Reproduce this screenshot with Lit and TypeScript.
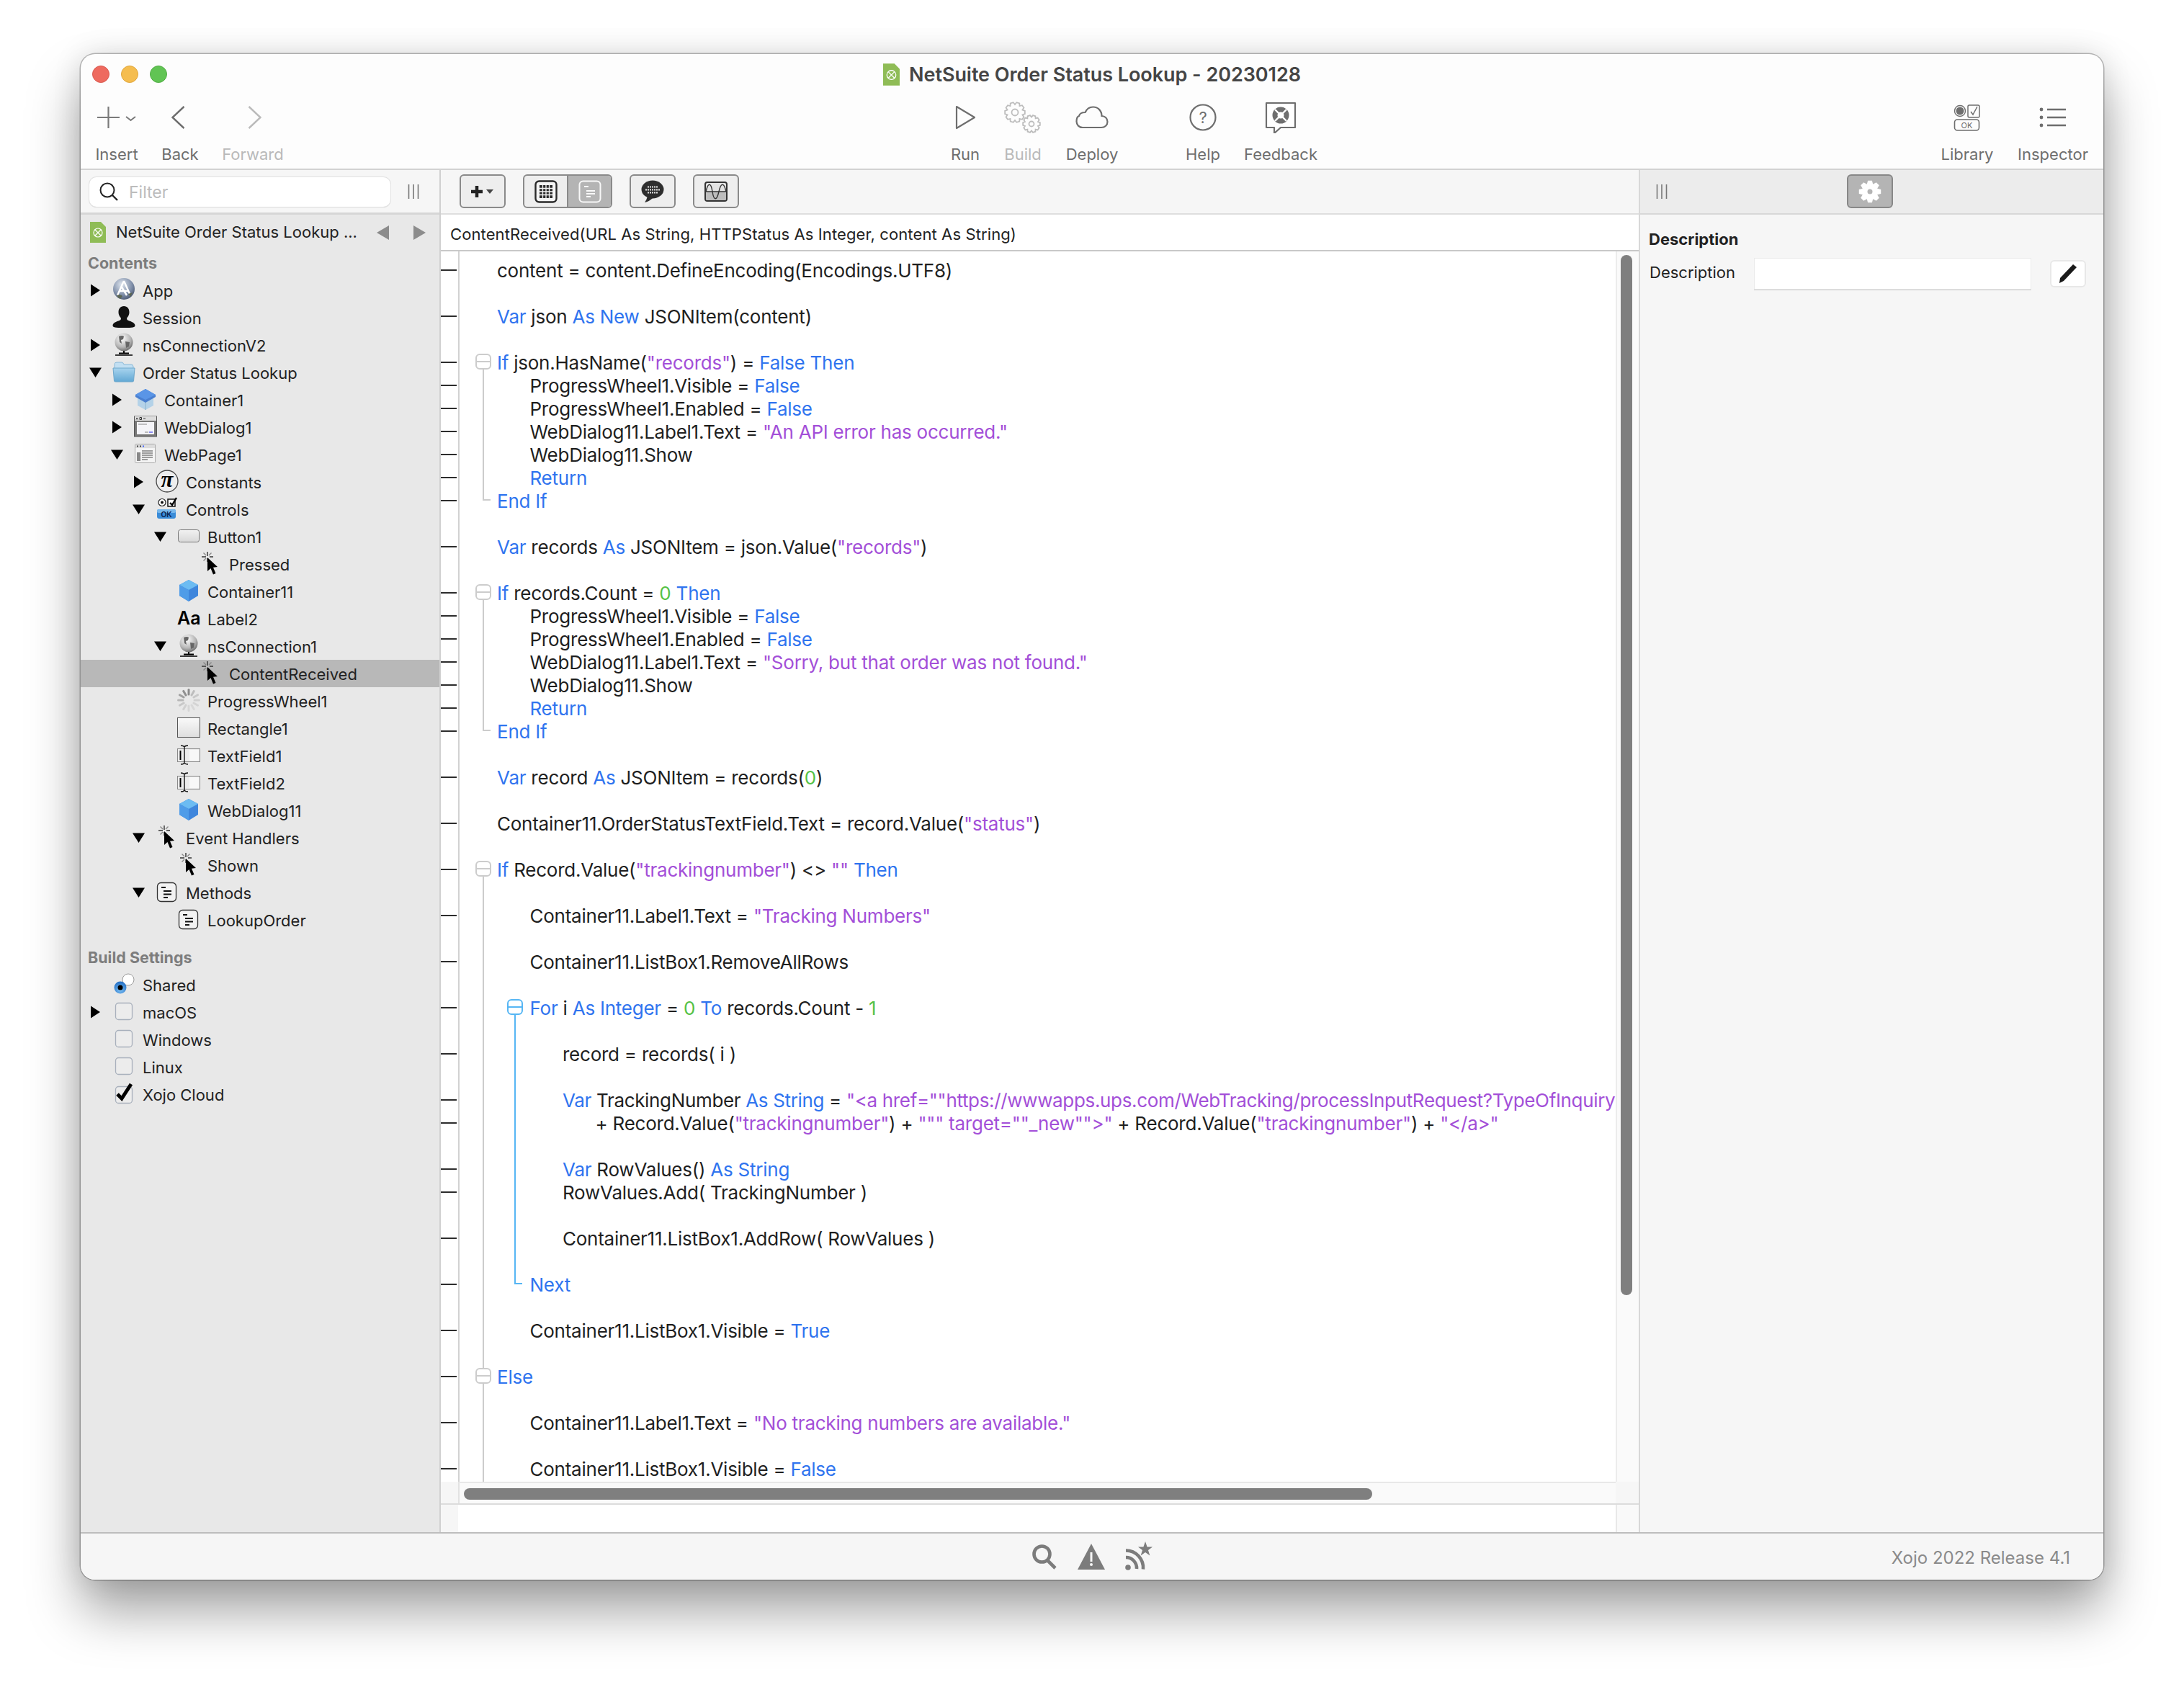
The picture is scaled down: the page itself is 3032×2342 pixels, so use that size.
import { LitElement, html, css } from 'lit';
import { customElement } from 'lit/decorators.js';
import { unsafeSVG } from 'lit/directives/unsafe-svg.js';

// gear outline, used by the Build icon and the inspector tab
const gearPath = (cx: number, cy: number, ro: number, ri: number, n: number) => {
  let d = '';
  const step = (Math.PI * 2) / n;
  for (let i = 0; i < n; i++) {
    const a = i * step;
    const pts: [number, number][] = [
      [ri, a - step * 0.5],
      [ro, a - step * 0.24],
      [ro, a + step * 0.24],
      [ri, a + step * 0.5],
    ];
    for (const [r, t] of pts) {
      d += `${i === 0 && t === a - step * 0.5 ? 'M' : 'L'}${(cx + r * Math.cos(t)).toFixed(2)} ${(cy + r * Math.sin(t)).toFixed(2)} `;
    }
  }
  return d + 'Z';
};

const SPARK = `<g stroke-width="1.4"><path d="M12 0v6M12 9v5M4 7h6M15 7h5" stroke="#333"/><path d="M6.5 1.5l3.5 3.5M17.500 1.500l-3.500 3.500M6.500 12.500l3.500-3.500" stroke="#888"/></g>`;
const CURSOR = `<path d="M12 8v19l4.500-4 3.500 8.500 3.500-1.600-3.500-8.200 6-.700z" fill="#000"/>`;

const ICONS: Record<string, string> = {
  app: `<defs><radialGradient id="g1" cx=".4" cy=".3" r=".8"><stop offset="0" stop-color="#dfe6ef"/><stop offset=".6" stop-color="#7f8ea8"/><stop offset="1" stop-color="#3f4c66"/></radialGradient></defs><circle cx="16" cy="15" r="15" fill="url(#g1)"/><path d="M16 4L7 24M16 4l9 20M9 18h14M12 11l8 13" stroke="#fff" stroke-width="2.400" fill="none"/><path d="M6 24q6-2 8 1l-3 4q-4-2-5-5zM22 22l6-2-3 6z" fill="#5b6552"/>`,
  person: `<path d="M16 1c5 0 7.500 3.600 7.500 8.500 0 3.500-1.500 6-3.500 8l.5 2.500c3 2 11 3 11 8 0 2.500-3 3-15.500 3S.500 30.500.500 28c0-5 8-6 11-8l.5-2.500c-2-2-3.500-4.500-3.500-8C8.500 4.600 11 1 16 1z" fill="#111"/>`,
  globe: `<defs><radialGradient id="g2" cx=".4" cy=".3" r=".8"><stop offset="0" stop-color="#fff"/><stop offset=".6" stop-color="#b5b5b5"/><stop offset="1" stop-color="#555"/></radialGradient></defs><circle cx="16" cy="13" r="12.500" fill="url(#g2)"/><path d="M9 5q5-2 7 0l-1 4-3 1 1 5-3-2zM18 12l6 1-1 6-4 2z" fill="#666"/><path d="M16 25v3M9 28.500h14" stroke="#000" stroke-width="2"/><path d="M4 31h24" stroke="#000" stroke-width="1.500"/>`,
  folder: `<defs><linearGradient id="g3" x1="0" y1="0" x2="0" y2="1"><stop offset="0" stop-color="#a8d4ee"/><stop offset="1" stop-color="#62a8d4"/></linearGradient></defs><path d="M3 6q0-3 3-3h7q2 0 3 3h10q3 0 3 3v3H3z" fill="#c2dff2" stroke="#88b8d8"/><path d="M1 11h30l-1.500 18q0 1-2 1h-23q-2 0-2-1z" fill="url(#g3)" stroke="#6fa8cc"/>`,
  lidbox: `<path d="M5 12v13l11 6 11-6V12z" fill="#b4d2e8"/><path d="M16 18v13" stroke="#98bcd6" stroke-width="1.500"/><path d="M2 10L16 2l14 8v3L16 21 2 13z" fill="#4a7fd0"/><path d="M2 10L16 2l14 8-14 7z" fill="#5a95e6"/>`,
  dialog: `<rect x="0.500" y="2" width="31" height="28" fill="#777" stroke="#555"/><rect x="1" y="2" width="30" height="6" fill="#ddd"/><path d="M3 4l2.500 2.500M5.500 4L3 6.500M8 3.500h2.500V6.500H8zM13 5h3" stroke="#333" fill="none"/><rect x="4" y="10" width="24" height="17" fill="#f4f4f8"/><path d="M6 13h12" stroke="#888"/><rect x="15" y="23" width="5" height="2" fill="#bbb"/><rect x="21" y="23" width="5" height="2" fill="#8a8af0"/>`,
  page: `<rect x="1.500" y="2.500" width="28" height="26" fill="#f4f4f4" stroke="#aaa" rx="1"/><rect x="2" y="3" width="27" height="5" fill="#ddd"/><path d="M4 4.500h2v2H4zM8 4.500h2v2H8z" fill="#444"/><rect x="12" y="4.500" width="2" height="2" fill="#46f"/><rect x="4" y="14" width="5" height="12" fill="#888"/><path d="M11 12h15M11 15h15M11 18h15M11 21h15M11 24h8" stroke="#444"/>`,
  pi: `<circle cx="16" cy="16" r="15" fill="#eee" stroke="#444" stroke-width="1.300"/><text x="16" y="24" text-anchor="middle" font-family="Liberation Serif" font-style="italic" font-weight="700" font-size="31" fill="#000">π</text>`,
  controls: `<circle cx="9" cy="7.500" r="5" fill="#fff" stroke="#222" stroke-width="1.200"/><circle cx="9" cy="7.500" r="2" fill="#111"/><rect x="17" y="3" width="10" height="10" fill="#fff" stroke="#111" stroke-width="1.500"/><path d="M20 8l3 3 6-10" stroke="#000" stroke-width="2.400" fill="none"/><rect x="2" y="17" width="26" height="13" rx="3" fill="#3a8cd8"/><rect x="2" y="17" width="26" height="5" rx="2" fill="#78b8ec"/><text x="15" y="28" text-anchor="middle" font-family="Liberation Sans" font-weight="700" font-size="10" fill="#0b2550">OK</text>`,
  button: `<defs><linearGradient id="g4" x1="0" y1="0" x2="0" y2="1"><stop offset="0" stop-color="#f2f2f2"/><stop offset="1" stop-color="#d8d8d8"/></linearGradient></defs><rect x="1.500" y="7.500" width="29" height="17" rx="3" fill="url(#g4)" stroke="#777"/>`,
  event: SPARK + CURSOR,
  cube: `<path d="M16 1l13 7v15l-13 8-13-8V8z" fill="#3f86dc"/><path d="M16 1l13 7-13 7L3 8z" fill="#6cbcf2"/><path d="M16 15v16L3 23V8z" fill="#4f9ce8"/>`,
  wheel: Array.from({ length: 12 }, (_, i) => {
    const a = (i * 30 * Math.PI) / 180;
    const shade = ['#8a8a8a', '#bdbdbd', '#c8c8c8', '#d0d0d0', '#d4d4d4', '#d8d8d8', '#d6d6d6', '#d0d0d0', '#c8c8c8', '#b8b8b8', '#a0a0a0', '#909090'][i];
    return `<path d="M${16 + 8 * Math.sin(a)} ${16 - 8 * Math.cos(a)}L${16 + 14.5 * Math.sin(a)} ${16 - 14.5 * Math.cos(a)}" stroke="${shade}" stroke-width="3" stroke-linecap="round"/>`;
  }).join(''),
  rect: `<defs><linearGradient id="g5" x1="0" y1="0" x2="0" y2="1"><stop offset="0" stop-color="#fafafa"/><stop offset="1" stop-color="#dedede"/></linearGradient></defs><rect x="0.500" y="2.500" width="31" height="27" fill="url(#g5)" stroke="#555"/>`,
  field: `<rect x="0.500" y="7.500" width="31" height="18" fill="#ececec" stroke="#888"/><rect x="17" y="9" width="13" height="15" fill="#f8f8f8"/><path d="M4.500 10v13" stroke="#000" stroke-width="2"/><path d="M5 3q4 0 5 2 1-2 5-2M10 5v22M5 29q4 0 5-2 1 2 5 2" stroke="#111" stroke-width="1.400" fill="none"/>`,
  method: `<rect x="2.500" y="3.500" width="26" height="26" rx="5" fill="#f2f2f2" stroke="#333" stroke-width="1.300"/><path d="M8 10h6M11 15h11M11 19.500h11M11 24h6" stroke="#111" stroke-width="2"/>`,
  radios: `<defs><radialGradient id="g6" cx=".5" cy=".7" r=".7"><stop offset="0" stop-color="#7cc0f4"/><stop offset="1" stop-color="#1f6cc4"/></radialGradient></defs><circle cx="22" cy="10" r="8" fill="#fff" stroke="#999"/><circle cx="11" cy="21" r="8.500" fill="url(#g6)"/><circle cx="11" cy="21" r="3.500" fill="#000"/>`,
  box: `<rect x="4.500" y="4.500" width="23" height="23" rx="4" fill="#ececec" stroke="#a8b0bc" stroke-width="1.300"/>`,
  checked: `<rect x="4.500" y="6.500" width="23" height="23" rx="4" fill="#ececec" stroke="#a8b0bc" stroke-width="1.300"/><path d="M7 17l6 6L26 3" stroke="#000" stroke-width="5" fill="none"/>`,
};

type TreeRow = { t: string; l: number; i?: string; a?: 'r' | 'd'; sel?: boolean };

const TREE: TreeRow[] = [
  { t: 'App', l: 0, i: 'app', a: 'r' },
  { t: 'Session', l: 0, i: 'person' },
  { t: 'nsConnectionV2', l: 0, i: 'globe', a: 'r' },
  { t: 'Order Status Lookup', l: 0, i: 'folder', a: 'd' },
  { t: 'Container1', l: 1, i: 'lidbox', a: 'r' },
  { t: 'WebDialog1', l: 1, i: 'dialog', a: 'r' },
  { t: 'WebPage1', l: 1, i: 'page', a: 'd' },
  { t: 'Constants', l: 2, i: 'pi', a: 'r' },
  { t: 'Controls', l: 2, i: 'controls', a: 'd' },
  { t: 'Button1', l: 3, i: 'button', a: 'd' },
  { t: 'Pressed', l: 4, i: 'event' },
  { t: 'Container11', l: 3, i: 'cube' },
  { t: 'Label2', l: 3, i: 'aa' },
  { t: 'nsConnection1', l: 3, i: 'globe', a: 'd' },
  { t: 'ContentReceived', l: 4, i: 'event', sel: true },
  { t: 'ProgressWheel1', l: 3, i: 'wheel' },
  { t: 'Rectangle1', l: 3, i: 'rect' },
  { t: 'TextField1', l: 3, i: 'field' },
  { t: 'TextField2', l: 3, i: 'field' },
  { t: 'WebDialog11', l: 3, i: 'cube' },
  { t: 'Event Handlers', l: 2, i: 'event', a: 'd' },
  { t: 'Shown', l: 3, i: 'event' },
  { t: 'Methods', l: 2, i: 'method', a: 'd' },
  { t: 'LookupOrder', l: 3, i: 'method' },
];

const BUILD: TreeRow[] = [
  { t: 'Shared', l: 0, i: 'radios' },
  { t: 'macOS', l: 0, i: 'box', a: 'r' },
  { t: 'Windows', l: 0, i: 'box' },
  { t: 'Linux', l: 0, i: 'box' },
  { t: 'Xojo Cloud', l: 0, i: 'checked' },
];

// [indent, source]; empty string is a blank line
const CODE: [number, string][] = [
  [0, 'content = content.DefineEncoding(Encodings.UTF8)'],
  [0, ''],
  [0, 'Var json As New JSONItem(content)'],
  [0, ''],
  [0, 'If json.HasName("records") = False Then'],
  [1, 'ProgressWheel1.Visible = False'],
  [1, 'ProgressWheel1.Enabled = False'],
  [1, 'WebDialog11.Label1.Text = "An API error has occurred."'],
  [1, 'WebDialog11.Show'],
  [1, 'Return'],
  [0, 'End If'],
  [0, ''],
  [0, 'Var records As JSONItem = json.Value("records")'],
  [0, ''],
  [0, 'If records.Count = 0 Then'],
  [1, 'ProgressWheel1.Visible = False'],
  [1, 'ProgressWheel1.Enabled = False'],
  [1, 'WebDialog11.Label1.Text = "Sorry, but that order was not found."'],
  [1, 'WebDialog11.Show'],
  [1, 'Return'],
  [0, 'End If'],
  [0, ''],
  [0, 'Var record As JSONItem = records(0)'],
  [0, ''],
  [0, 'Container11.OrderStatusTextField.Text = record.Value("status")'],
  [0, ''],
  [0, 'If Record.Value("trackingnumber") <> "" Then'],
  [0, ''],
  [1, 'Container11.Label1.Text = "Tracking Numbers"'],
  [0, ''],
  [1, 'Container11.ListBox1.RemoveAllRows'],
  [0, ''],
  [1, 'For i As Integer = 0 To records.Count - 1'],
  [0, ''],
  [2, 'record = records( i )'],
  [0, ''],
  [2, 'Var TrackingNumber As String = "<a href=""https://wwwapps.ups.com/WebTracking/processInputRequest?TypeOfInquiry'],
  [3, '+ Record.Value("trackingnumber") + """ target=""_new"">" + Record.Value("trackingnumber") + "</a>"'],
  [0, ''],
  [2, 'Var RowValues() As String'],
  [2, 'RowValues.Add( TrackingNumber )'],
  [0, ''],
  [2, 'Container11.ListBox1.AddRow( RowValues )'],
  [0, ''],
  [1, 'Next'],
  [0, ''],
  [1, 'Container11.ListBox1.Visible = True'],
  [0, ''],
  [0, 'Else'],
  [0, ''],
  [1, 'Container11.Label1.Text = "No tracking numbers are available."'],
  [0, ''],
  [1, 'Container11.ListBox1.Visible = False'],
];

// fold markers: first line, last line, x inside the code body
const FOLDS = [
  { from: 4, to: 10, x: 48, blue: false },
  { from: 14, to: 20, x: 48, blue: false },
  { from: 26, to: 48, x: 48, blue: false },
  { from: 48, to: 54, x: 48, blue: false, open: true },
  { from: 32, to: 44, x: 92, blue: true },
];

const TOKEN = /"(?:[^"]|"")*"?|\b(?:Var|As|New|If|Then|False|True|Return|End|For|To|Integer|String|Next|Else)\b|\b\d+\b/g;

function highlight(src: string) {
  const out: unknown[] = [];
  let last = 0;
  for (const m of src.matchAll(TOKEN)) {
    const i = m.index ?? 0;
    if (i > last) out.push(src.slice(last, i));
    const tok = m[0];
    const cls = tok[0] === '"' ? 's' : /\d/.test(tok[0]) ? 'n' : 'k';
    out.push(html`<span class=${cls}>${tok}</span>`);
    last = i + tok.length;
  }
  if (last < src.length) out.push(src.slice(last));
  return out;
}

const xojoDoc = (w: number, h: number) => html`<svg width=${w} height=${h} viewBox="0 0 22 29">
  <path d="M0 0h15l7 7v22H0z" fill="#8fbc56" />
  <circle cx="11" cy="15" r="6" fill="none" stroke="#fff" stroke-width="1.200" />
  <path d="M7 11l8 8M15 11l-8 8" stroke="#fff" stroke-width="1.200" />
</svg>`;

const TOOL_ICONS: Record<string, unknown> = {
  insert: html`<svg width="58" height="50" viewBox="0 0 58 50">
    <path d="M2 25h31M17.500 10v30" stroke="#7a7a7a" stroke-width="2.200" fill="none" />
    <path d="M42 24l6.500 5 6.500-5" stroke="#7a7a7a" stroke-width="2" fill="none" />
  </svg>`,
  back: html`<svg width="24" height="34" viewBox="0 0 24 34"><path d="M17.500 2L1.500 17l16 15" stroke="#6e6e6e" stroke-width="2.400" fill="none" /></svg>`,
  forward: html`<svg width="24" height="34" viewBox="0 0 24 34"><path d="M6.500 2l16 15-16 15" stroke="#bbb" stroke-width="2.400" fill="none" /></svg>`,
  run: html`<svg width="32" height="34" viewBox="0 0 32 34"><path d="M4 2l25 15L4 32z" stroke="#6e6e6e" stroke-width="2.200" fill="none" stroke-linejoin="round" /></svg>`,
  build: html`<svg width="52" height="44" viewBox="0 0 52 44">
    <path d=${gearPath(15, 15, 14, 11, 10)} fill="none" stroke="#bdbdbd" stroke-width="1.800" />
    <circle cx="15" cy="15" r="4.500" fill="none" stroke="#bdbdbd" stroke-width="1.800" />
    <path d=${gearPath(38, 31, 12, 9.5, 10)} fill="none" stroke="#bdbdbd" stroke-width="1.800" />
    <circle cx="38" cy="31" r="3.500" fill="none" stroke="#bdbdbd" stroke-width="1.800" />
  </svg>`,
  deploy: html`<svg width="46" height="32" viewBox="0 0 46 32"><path d="M10 30h26c5 0 8.500-3.500 8.500-8s-3.500-8-8-8c0-7-5-12.500-12-12.500-5.500 0-9 3-11 7.500-6 0-8 3-8.500 5C2 15 1.500 18 1.500 21.500 1.500 26.500 5 30 10 30z" fill="none" stroke="#6e6e6e" stroke-width="2.200" /></svg>`,
  help: html`<svg width="38" height="38" viewBox="0 0 38 38"><circle cx="19" cy="19" r="17.500" fill="none" stroke="#6e6e6e" stroke-width="2.200" /><text x="19" y="27" text-anchor="middle" font-family="Inter" font-size="22" fill="#6e6e6e">?</text></svg>`,
  feedback: html`<svg width="44" height="44" viewBox="0 0 44 44">
    <path d="M2 2h40v34H22l-9 8v-8H2z" fill="#fff" stroke="#6e6e6e" stroke-width="2.200" stroke-linejoin="round" />
    <circle cx="22" cy="19" r="11.500" fill="#6e6e6e" />
    <path d="M14 11l16 16M30 11L14 27" stroke="#fff" stroke-width="2.400" />
    <circle cx="22" cy="19" r="4.500" fill="#fff" />
  </svg>`,
  library: html`<svg width="38" height="38" viewBox="0 0 38 38">
    <circle cx="9" cy="10" r="7.500" fill="#fff" stroke="#6e6e6e" stroke-width="1.400" /><circle cx="9" cy="10" r="5.500" fill="#6e6e6e" />
    <rect x="20" y="2" width="16" height="17" rx="2" fill="none" stroke="#6e6e6e" stroke-width="1.500" /><path d="M24 11l3 4 6-11" stroke="#6e6e6e" stroke-width="1.500" fill="none" />
    <rect x="1.500" y="22" width="34" height="15" rx="4" fill="none" stroke="#6e6e6e" stroke-width="1.600" />
    <text x="18.500" y="34" text-anchor="middle" font-family="Inter" font-size="11" fill="#6e6e6e">OK</text>
  </svg>`,
  inspector: html`<svg width="38" height="28" viewBox="0 0 38 28">
    <circle cx="3" cy="3" r="2.400" fill="#6e6e6e" /><circle cx="3" cy="14" r="2.400" fill="#6e6e6e" /><circle cx="3" cy="25" r="2.400" fill="#6e6e6e" />
    <path d="M11 3h26M11 14h26M11 25h26" stroke="#6e6e6e" stroke-width="2.400" />
  </svg>`,
};

const TOOLS_LEFT = [
  { k: 'insert', label: 'Insert', w: 88 },
  { k: 'back', label: 'Back', w: 88 },
  { k: 'forward', label: 'Forward', w: 114, off: true },
];
const TOOLS_MID = [
  { k: 'run', label: 'Run', w: 80 },
  { k: 'build', label: 'Build', w: 80, off: true },
  { k: 'deploy', label: 'Deploy', w: 112 },
];
const TOOLS_HELP = [
  { k: 'help', label: 'Help', w: 100 },
  { k: 'feedback', label: 'Feedback', w: 116 },
];
const TOOLS_RIGHT = [
  { k: 'library', label: 'Library', w: 120 },
  { k: 'inspector', label: 'Inspector', w: 118 },
];

const columns = (c = '#777') => html`<svg class="cols" width="16" height="20" viewBox="0 0 16 20"><path d="M1.500 0v20M8 0v20M14.500 0v20" stroke=${c} stroke-width="1.600" /></svg>`;

@customElement('app-root')
export class AppRoot extends LitElement {
  static styles = css`
    :host {
      display: block;
      width: 3032px;
      height: 2342px;
      background: #fff;
      font-family: Inter, 'Liberation Sans', sans-serif;
      color: #222;
      overflow: hidden;
    }

    .window {
      box-sizing: border-box;
      width: 2808px;
      height: 2118px;
      margin: 75px 0 0 112px;
      border-radius: 20px;
      overflow: hidden;
      display: flex;
      flex-direction: column;
      background: #fdfdfd;
      box-shadow: 0 0 0 1.5px rgba(0, 0, 0, 0.25), 0 44px 72px rgba(0, 0, 0, 0.36), 0 0 40px rgba(0, 0, 0, 0.12);
    }

    .toolbar {
      box-sizing: border-box;
      height: 161px;
      flex: none;
      border-bottom: 2px solid #d2d2d2;
    }

    .titlebar {
      height: 56px;
      display: grid;
      grid-template-columns: 1fr auto 1fr;
      align-items: center;
    }

    .lights {
      display: flex;
      gap: 16px;
      padding-left: 16px;
    }

    .light {
      width: 24px;
      height: 24px;
      border-radius: 50%;
      box-sizing: border-box;
    }
    .light.red { background: #ee6a5f; border: 1px solid #d85a50; }
    .light.yellow { background: #f5bd4f; border: 1px solid #dfa63e; }
    .light.green { background: #61c454; border: 1px solid #52ad46; }

    .title {
      display: flex;
      align-items: center;
      gap: 13px;
      font-size: 27px;
      font-weight: 600;
      color: #454545;
      letter-spacing: -0.05px;
    }

    .tools {
      display: flex;
      padding-left: 6px;
      margin-top: 7px;
    }

    .group {
      display: flex;
    }
    .group.mid { margin-left: 892px; }
    .group.help { margin-left: 48px; }
    .group.right { margin-left: auto; padding-right: 11px; }

    .tool {
      display: flex;
      flex-direction: column;
      align-items: center;
      color: #6e6e6e;
      font-size: 22px;
    }
    .tool.off { color: #b9b9b9; }

    .tool-icon {
      height: 50px;
      display: flex;
      align-items: center;
      justify-content: center;
    }

    .tool-label {
      margin-top: 13px;
      line-height: 26px;
    }

    .main {
      flex: 1;
      display: flex;
      min-height: 0;
    }

    .sidebar {
      box-sizing: border-box;
      width: 500px;
      flex: none;
      background: #e8e8e8;
      border-right: 2px solid #d0d0d0;
      display: flex;
      flex-direction: column;
      font-size: 22px;
    }

    .filter-bar {
      box-sizing: border-box;
      height: 62px;
      flex: none;
      background: #f6f6f6;
      border-bottom: 3px solid #d6d6d6;
      display: flex;
      align-items: center;
      padding-left: 12px;
    }

    .filter {
      box-sizing: border-box;
      width: 418px;
      height: 41px;
      margin-top: 1px;
      background: #fff;
      border-radius: 10px;
      box-shadow: 0 0 0 1px #e2e2e2, 0 1px 1px #aaa;
      display: flex;
      align-items: center;
      gap: 15px;
      padding-left: 14px;
      color: #bcbcbc;
      font-size: 23px;
    }

    .filter span {
      padding-top: 2px;
    }

    .filter-bar .cols {
      margin-left: 24px;
    }

    .project {
      height: 49px;
      flex: none;
      display: flex;
      align-items: center;
      padding: 0 19px 0 13px;
      gap: 14px;
      white-space: nowrap;
      color: #222;
    }

    .project .name {
      flex: 1;
      margin-top: -2px;
    }

    .nav {
      display: flex;
      gap: 34px;
    }

    .heading {
      height: 37px;
      line-height: 37px;
      padding-left: 10px;
      font-weight: 700;
      color: #7d7d7d;
      font-size: 21.500px;
    }

    .heading.build {
      margin-top: 15px;
    }

    .row {
      box-sizing: border-box;
      height: 38px;
      display: flex;
      align-items: center;
      white-space: nowrap;
    }

    .row.sel {
      background: #b8b8b8;
    }

    .arrow {
      width: 30px;
      flex: none;
      display: flex;
      margin-left: -3px;
      margin-right: 3px;
    }

    .row-icon {
      width: 32px;
      height: 32px;
      flex: none;
      margin-right: 10px;
      margin-top: -3px;
      position: relative;
    }

    .row-icon svg {
      display: block;
    }

    .aa {
      font-size: 25px;
      font-weight: 600;
      line-height: 32px;
      color: #000;
      text-align: center;
    }

    .row-text {
      padding-top: 2px;
    }

    .center {
      width: 1663px;
      flex: none;
      display: flex;
      flex-direction: column;
      background: #fff;
      min-width: 0;
    }

    .bar {
      box-sizing: border-box;
      height: 62px;
      flex: none;
      background: #f6f6f6;
      border-bottom: 2px solid #dedede;
      display: flex;
      padding: 6px 0 0 26px;
    }

    .btn {
      box-sizing: border-box;
      height: 47px;
      width: 64px;
      border: 2px solid #8a8a8a;
      border-radius: 6px;
      background: #eeeeee;
      display: flex;
      align-items: center;
      justify-content: center;
      margin-right: 24px;
    }

    .btn.seg {
      width: 124px;
      padding: 0;
      overflow: hidden;
      align-items: stretch;
    }

    .seg-part {
      flex: 1;
      display: flex;
      align-items: center;
      justify-content: center;
    }

    .seg-part.on {
      background: #b4b4b4;
      border-left: 2px solid #8a8a8a;
    }

    .sig {
      box-sizing: border-box;
      height: 51px;
      flex: none;
      border-bottom: 2px solid #c8c8c8;
      padding: 13px 0 0 13px;
      font-size: 22px;
      line-height: 28px;
      letter-spacing: 0.11px;
      white-space: nowrap;
    }

    .editor {
      flex: none;
      height: 1708px;
      display: flex;
    }

    .body {
      position: relative;
      flex: 1;
      min-width: 0;
      overflow: hidden;
      padding-top: 10px;
      font-size: 26px;
      letter-spacing: -0.24px;
      color: #1f1f1f;
    }

    .line {
      height: 32px;
      display: flex;
      align-items: center;
      white-space: pre;
    }

    .gutter {
      width: 24px;
      height: 100%;
      flex: none;
      display: flex;
      align-items: center;
    }

    .tick {
      width: 22px;
      height: 2.500px;
      background: #2c2c2c;
    }

    .src {
      padding-left: 54px;
    }

    .src.long {
      letter-spacing: -0.34px;
    }

    .k { color: #2f74ef; }
    .s { color: #a34fd8; }
    .n { color: #55c246; }

    .gutter-rule {
      position: absolute;
      left: 24px;
      top: 0;
      bottom: 0;
      width: 1.500px;
      background: #d2d2d2;
    }

    .fold-box {
      position: absolute;
      box-sizing: border-box;
      width: 22px;
      height: 22px;
      border: 2px solid #cccccc;
      border-radius: 6px;
      background: #fff;
    }

    .fold-box::after {
      content: '';
      position: absolute;
      left: 0;
      right: 0;
      top: 8px;
      height: 2px;
      background: #cccccc;
    }

    .fold-line {
      position: absolute;
      width: 2px;
      background: #cccccc;
    }

    .fold-end {
      position: absolute;
      width: 11px;
      height: 2px;
      background: #cccccc;
    }

    .blue.fold-box { border-color: #56b6f4; }
    .blue.fold-box::after, .blue.fold-line, .blue.fold-end { background: #56b6f4; }

    .vscroll {
      box-sizing: border-box;
      width: 32px;
      flex: none;
      background: #fafafa;
      border-left: 2px solid #ececec;
      padding: 5px 0 0 5px;
    }

    .vthumb {
      width: 16px;
      height: 1444px;
      border-radius: 8px;
      background: #7f7f7f;
    }

    .hscroll {
      box-sizing: border-box;
      height: 32px;
      flex: none;
      display: flex;
      background: #f6f6f6;
      border-bottom: 2px solid #dcdcdc;
    }

    .hscroll-track {
      box-sizing: border-box;
      width: 1607px;
      margin-left: 24px;
      background: #fafafa;
      border-top: 2px solid #e8e8e8;
      border-left: 2px solid #e2e2e2;
      padding: 7px 0 0 6px;
    }

    .hthumb {
      width: 1261px;
      height: 16px;
      border-radius: 8px;
      background: #7f7f7f;
    }

    .blank {
      flex: 1;
      display: flex;
      background: #fff;
    }

    .blank-left {
      width: 24px;
      background: #f6f6f6;
    }

    .blank-right {
      box-sizing: border-box;
      width: 32px;
      margin-left: auto;
      background: #f9f9f9;
      border-left: 2px solid #e8e8e8;
    }

    .inspector {
      box-sizing: border-box;
      flex: 1;
      background: #f6f6f6;
      border-left: 2px solid #d8d8d8;
      min-width: 0;
    }

    .insp-bar {
      box-sizing: border-box;
      height: 62px;
      background: #ececec;
      border-bottom: 2px solid #d8d8d8;
      display: grid;
      grid-template-columns: 1fr auto 1fr;
      align-items: center;
      padding: 0 27px 0 22px;
    }

    .gear-btn {
      box-sizing: border-box;
      width: 64px;
      height: 47px;
      margin-top: -1px;
      border: 2px solid #888;
      border-radius: 6px;
      background: #b4b4b4;
      display: flex;
      align-items: center;
      justify-content: center;
    }

    .insp-body {
      padding: 20px 24px 0 12px;
    }

    .insp-head {
      font-size: 22px;
      font-weight: 700;
      line-height: 28px;
      color: #222;
    }

    .insp-row {
      display: flex;
      align-items: center;
      margin-top: 13px;
      font-size: 22px;
    }

    .insp-label {
      width: 146px;
      padding-left: 1px;
      margin-top: -4px;
    }

    .insp-input {
      width: 383px;
      height: 42px;
      background: #fff;
      box-shadow: 0 0 0 1px #eaeaea, 0 1px 0 1px #c8c8c8;
    }

    .pencil {
      box-sizing: border-box;
      width: 50px;
      height: 38px;
      margin-left: 27px;
      background: #fff;
      border: 2px solid #e8e8e8;
      border-radius: 6px;
      display: flex;
      align-items: center;
      justify-content: center;
    }

    .status {
      box-sizing: border-box;
      height: 66px;
      flex: none;
      background: #f6f6f6;
      border-top: 2px solid #bdbdbd;
      display: grid;
      grid-template-columns: 1fr auto 1fr;
      align-items: center;
    }

    .status-icons {
      display: flex;
      align-items: center;
      gap: 28px;
    }

    .version {
      justify-self: end;
      padding: 2px 46px 0 0;
      font-size: 24px;
      color: #8a8a8a;
    }
  `;

  private tool(t: { k: string; label: string; w: number; off?: boolean }) {
    return html`<div class="tool ${t.off ? 'off' : ''}" style="width:${t.w}px">
      <div class="tool-icon">${TOOL_ICONS[t.k]}</div>
      <div class="tool-label">${t.label}</div>
    </div>`;
  }

  private rowIcon(name?: string) {
    if (!name) return html`<div class="row-icon"></div>`;
    if (name === 'aa') return html`<div class="row-icon aa">Aa</div>`;
    return html`<div class="row-icon">
      <svg width="32" height="32" viewBox="0 0 32 32" style="overflow:visible">${unsafeSVG(ICONS[name])}</svg>
    </div>`;
  }

  private row(r: TreeRow) {
    return html`<div class="row ${r.sel ? 'sel' : ''}" style="padding-left:${14 + r.l * 30}px">
      <div class="arrow">
        ${r.a === 'r'
          ? html`<svg width="20" height="20" viewBox="0 0 20 20"><path d="M3 1.500L16 10 3 18.500z" fill="#000" /></svg>`
          : r.a === 'd'
            ? html`<svg width="20" height="20" viewBox="0 0 20 20"><path d="M1 3.500h17L9.500 17z" fill="#000" /></svg>`
            : ''}
      </div>
      ${this.rowIcon(r.i)}
      <div class="row-text">${r.t}</div>
    </div>`;
  }

  render() {
    return html`
      <div class="window">
        <div class="toolbar">
          <div class="titlebar">
            <div class="lights">
              <div class="light red"></div>
              <div class="light yellow"></div>
              <div class="light green"></div>
            </div>
            <div class="title">${xojoDoc(23, 31)}<span>NetSuite Order Status Lookup - 20230128</span></div>
            <div></div>
          </div>
          <div class="tools">
            <div class="group">${TOOLS_LEFT.map((t) => this.tool(t))}</div>
            <div class="group mid">${TOOLS_MID.map((t) => this.tool(t))}</div>
            <div class="group help">${TOOLS_HELP.map((t) => this.tool(t))}</div>
            <div class="group right">${TOOLS_RIGHT.map((t) => this.tool(t))}</div>
          </div>
        </div>

        <div class="main">
          <div class="sidebar">
            <div class="filter-bar">
              <div class="filter">
                <svg width="26" height="26" viewBox="0 0 26 26"><circle cx="11" cy="11" r="9.500" fill="none" stroke="#222" stroke-width="2" /><path d="M18 18l7 7" stroke="#222" stroke-width="2.400" /></svg>
                <span>Filter</span>
              </div>
              ${columns()}
            </div>
            <div class="project">
              ${xojoDoc(22, 29)}
              <span class="name">NetSuite Order Status Lookup ...</span>
              <div class="nav">
                <svg width="17" height="20" viewBox="0 0 17 20"><path d="M17 0v20L0 10z" fill="#8c8c8c" /></svg>
                <svg width="17" height="20" viewBox="0 0 17 20"><path d="M0 0v20l17-10z" fill="#8c8c8c" /></svg>
              </div>
            </div>
            <div class="heading">Contents</div>
            ${TREE.map((r) => this.row(r))}
            <div class="heading build">Build Settings</div>
            ${BUILD.map((r) => this.row(r))}
          </div>

          <div class="center">
            <div class="bar">
              <div class="btn">
                <svg width="32" height="18" viewBox="0 0 32 18"><path d="M0 9h16M8 1v16" stroke="#222" stroke-width="4.500" /><path d="M21 6h10l-5 6z" fill="#444" /></svg>
              </div>
              <div class="btn seg">
                <div class="seg-part">
                  <svg width="32" height="32" viewBox="0 0 32 32">
                    <rect x="1.500" y="1.500" width="29" height="29" rx="5" fill="#f4f4f4" stroke="#2a2a2a" stroke-width="2.400" />
                    <path d="M7 7h18v18H7z" fill="#2a2a2a" />
                    <path d="M11.500 7v18M16 7v18M20.500 7v18M7 11.500h18M7 16h18M7 20.500h18" stroke="#f4f4f4" stroke-width="1.300" />
                  </svg>
                </div>
                <div class="seg-part on">
                  <svg width="32" height="32" viewBox="0 0 32 32">
                    <rect x="1.500" y="1.500" width="29" height="29" rx="5" fill="#b4b4b4" stroke="#f8f8f8" stroke-width="2" />
                    <path d="M8 9h6M11 15h12M11 19h12M11 23h6" stroke="#f8f8f8" stroke-width="2" />
                  </svg>
                </div>
              </div>
              <div class="btn">
                <svg width="32" height="32" viewBox="0 0 32 32">
                  <ellipse cx="16" cy="13" rx="15.500" ry="12.500" fill="#2e2e2e" />
                  <path d="M9 22q-1 5-4 9 6-1 11-6z" fill="#2e2e2e" />
                  <path d="M9 9.500h14M6 13.500h20M9 17.500h14" stroke="#e8e8e8" stroke-width="2" stroke-dasharray="2 1" />
                </svg>
              </div>
              <div class="btn">
                <svg width="32" height="28" viewBox="0 0 32 28">
                  <rect x="1" y="1" width="30" height="26" rx="3" fill="#e2e2e2" stroke="#333" stroke-width="2" />
                  <rect x="2" y="14" width="28" height="12" rx="2" fill="#bdbdbd" />
                  <path d="M2 14h28" stroke="#333" stroke-width="1.500" />
                  <path d="M2 14c3-13 7-13 9 0s6 13 9 0 7-13 10 0" stroke="#333" stroke-width="1.400" fill="none" />
                </svg>
              </div>
            </div>
            <div class="sig">ContentReceived(URL As String, HTTPStatus As Integer, content As String)</div>
            <div class="editor">
              <div class="body">
                <div class="gutter-rule"></div>
                ${CODE.map(
                  ([lvl, src]) => html`<div class="line">
                    <div class="gutter">${src ? html`<div class="tick"></div>` : ''}</div>
                    <div class="src ${src.length > 110 ? 'long' : ''}" style="margin-left:${lvl * 45.5}px">${highlight(src)}</div>
                  </div>`,
                )}
                ${FOLDS.map((f) => {
                  const top = 10 + f.from * 32 + 4;
                  const endY = 10 + f.to * 32 + 14;
                  const cls = f.blue ? 'blue' : '';
                  return html`
                    <div class="fold-line ${cls}" style="left:${f.x + 10}px;top:${top + 20}px;height:${endY - top - 20}px"></div>
                    ${f.open ? '' : html`<div class="fold-end ${cls}" style="left:${f.x + 10}px;top:${endY}px"></div>`}
                    <div class="fold-box ${cls}" style="left:${f.x}px;top:${top}px"></div>
                  `;
                })}
              </div>
              <div class="vscroll"><div class="vthumb"></div></div>
            </div>
            <div class="hscroll">
              <div class="hscroll-track"><div class="hthumb"></div></div>
              <div style="flex:1"></div>
            </div>
            <div class="blank">
              <div class="blank-left"></div>
              <div class="blank-right"></div>
            </div>
          </div>

          <div class="inspector">
            <div class="insp-bar">
              ${columns('#777')}
              <div class="gear-btn">
                <svg width="32" height="32" viewBox="0 0 32 32">
                  <path d=${gearPath(16, 16, 15.5, 11, 8)} fill="#fff" />
                  <circle cx="16" cy="16" r="3.500" fill="#b4b4b4" />
                </svg>
              </div>
              <div></div>
            </div>
            <div class="insp-body">
              <div class="insp-head">Description</div>
              <div class="insp-row">
                <div class="insp-label">Description</div>
                <div class="insp-input"></div>
                <div class="pencil">
                  <svg width="28" height="28" viewBox="0 0 28 28"><path d="M21 1l5 4L8 24l-6 3 1-7z" fill="#1a1a1a" /></svg>
                </div>
              </div>
            </div>
          </div>
        </div>

        <div class="status">
          <div></div>
          <div class="status-icons">
            <svg width="36" height="36" viewBox="0 0 36 36"><circle cx="14.500" cy="14.500" r="11" fill="none" stroke="#7c7c7c" stroke-width="4.600" /><path d="M22 23l11 11" stroke="#7c7c7c" stroke-width="4.600" /></svg>
            <svg width="38" height="36" viewBox="0 0 38 36"><path d="M19 0l19 36H0z" fill="#7c7c7c" /><path d="M19 12v13" stroke="#f6f6f6" stroke-width="3" /><circle cx="19" cy="29" r="2" fill="#f6f6f6" /></svg>
            <svg width="38" height="42" viewBox="0 0 38 42">
              <circle cx="4" cy="36" r="3.800" fill="#7c7c7c" />
              <path d="M1 22a15 15 0 0 1 15 16M1 12.500a24 24 0 0 1 24 26" stroke="#7c7c7c" stroke-width="4.600" fill="none" />
              <path d="M28 0l2.600 7.500H38l-6 4.500 2.300 7.500L28 15l-6.300 4.500 2.300-7.500-6-4.500h7.400z" fill="#7c7c7c" />
            </svg>
          </div>
          <div class="version">Xojo 2022 Release 4.1</div>
        </div>
      </div>
    `;
  }
}

declare global {
  interface HTMLElementTagNameMap {
    'app-root': AppRoot;
  }
}
